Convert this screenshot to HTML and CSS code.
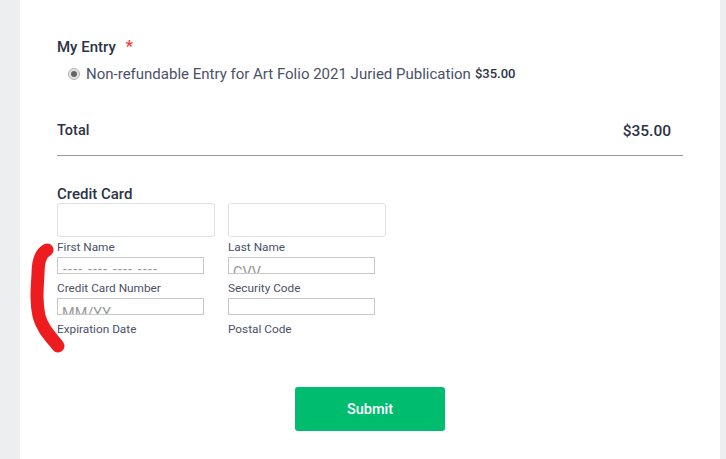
FILE: index.html
```html
<!DOCTYPE html>
<html lang="en">
<head>
  <meta charset="UTF-8">
  <meta name="viewport" content="width=device-width, initial-scale=1.0">
  <title>Entry Form</title>
  <link rel="stylesheet" href="styles.css">
</head>
<body>
  <div class="form-card">
    <p class="field-title">My Entry <span class="required">*</span></p>
    <div class="entry-option">
      <span class="radio"><span class="radio-dot"></span></span>
      <span class="entry-text">Non-refundable Entry for Art Folio 2021 Juried Publication</span>
      <span class="entry-price">$35.00</span>
    </div>

    <div class="total-row">
      <span>Total</span>
      <span class="total-price">$35.00</span>
    </div>

    <p class="card-title">Credit Card</p>
    <div class="card-grid">
      <div class="card-field">
        <div class="name-box"></div>
        <label>First Name</label>
      </div>
      <div class="card-field">
        <div class="name-box"></div>
        <label>Last Name</label>
      </div>
      <div class="card-field">
        <div class="small-box"><span class="dashes">---- ---- ---- ----</span></div>
        <label>Credit Card Number</label>
      </div>
      <div class="card-field">
        <div class="small-box"><span class="hint">CVV</span></div>
        <label>Security Code</label>
      </div>
      <div class="card-field">
        <div class="small-box"><span class="hint">MM/YY</span></div>
        <label>Expiration Date</label>
      </div>
      <div class="card-field">
        <div class="small-box"></div>
        <label>Postal Code</label>
      </div>
    </div>

    <div class="submit-row">
      <button class="btn-submit">Submit</button>
    </div>
  </div>

  <!-- red marker scribble drawn over the screenshot -->
  <svg class="scribble" width="60" height="120" viewBox="0 0 60 120">
    <path d="M27 10 C21 13 18 20 18 34 C17 50 16 62 19 76 C22 88 30 96 38 106" fill="none" stroke="#ee1c1f" stroke-width="13" stroke-linecap="round" stroke-linejoin="round"/>
  </svg>
</body>
</html>
```

FILE: styles.css
```css
* {
  box-sizing: border-box;
  margin: 0;
  padding: 0;
  font-family: Roboto, "Liberation Sans", Arial, sans-serif;
}

body {
  background-color: #eceef0;
  height: 459px;
  overflow: hidden;
  position: relative;
}

.form-card {
  width: 700px;
  height: 459px;
  margin-left: 20px;
  background-color: white;
  padding: 37px 37px 0;
  color: #2c3345;
}

.field-title {
  font-size: 15px;
  font-weight: 500;
  line-height: 18px;
}

.required {
  color: #f23a3c;
  font-size: 17px;
  margin-left: 6px;
}

.entry-option {
  display: flex;
  align-items: center;
  margin-top: 9px;
  padding-left: 11px;
  line-height: 18px;
}

.radio {
  width: 12px;
  height: 12px;
  border-radius: 50%;
  background-color: #e4e4e4;
  border: 1px solid #b4b4b4;
  display: flex;
  align-items: center;
  justify-content: center;
  margin-right: 6px;
}

.radio-dot {
  width: 6px;
  height: 6px;
  border-radius: 50%;
  background-color: #666;
}

.entry-text {
  font-size: 15px;
  color: #4b5168;
}

.entry-price {
  font-size: 13px;
  font-weight: 500;
  margin-left: 4px;
}

.total-row {
  display: flex;
  justify-content: space-between;
  margin-top: 39px;
  padding: 0 12px 15px 0;
  border-bottom: 1px solid #999;
  font-size: 14.5px;
  font-weight: 500;
  line-height: 18px;
}

.total-price {
  font-size: 15.5px;
}

.card-title {
  margin-top: 30px;
  font-size: 15px;
  font-weight: 500;
  line-height: 17px;
}

.card-grid {
  display: grid;
  grid-template-columns: 158px 158px;
  column-gap: 13px;
}

.card-field label {
  display: block;
  font-size: 11.8px;
  line-height: 14px;
  color: #4b5168;
}

.name-box {
  height: 34px;
  border: 1px solid #dfe1ea;
  border-radius: 3px;
  margin-bottom: 3px;
}

.small-box {
  width: 147px;
  height: 17px;
  margin-top: 3px;
  margin-bottom: 7px;
  border: 1px solid #c9c9c9;
  overflow: hidden;
  padding-left: 4px;
  color: #999;
  font-size: 14.5px;
  line-height: 20px;
}

.dashes {
  display: block;
  margin-top: 1px;
  margin-left: 1px;
  font-size: 14px;
  line-height: 20px;
  letter-spacing: 1.2px;
  white-space: nowrap;
}

.hint {
  display: block;
  margin-top: 5px;
}

.submit-row {
  display: flex;
  justify-content: center;
  margin-top: 51px;
}

.btn-submit {
  width: 150px;
  height: 44px;
  border: none;
  border-radius: 3px;
  background-color: #00bc6f;
  color: white;
  font-size: 14.5px;
  font-weight: 500;
}

.scribble {
  position: absolute;
  left: 20px;
  top: 240px;
}
```
